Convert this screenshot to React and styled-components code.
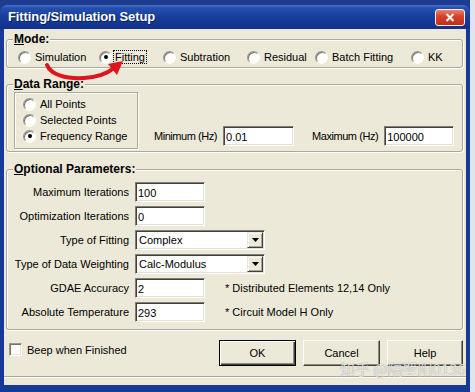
import React from 'react';
import styled, { createGlobalStyle } from 'styled-components';

const GlobalStyle = createGlobalStyle`
  html, body {
    margin: 0;
    padding: 0;
  }
  body {
    font-family: "Liberation Sans", Arial, sans-serif;
    font-size: 11px;
    color: #000;
    background: #1d3c8f;
  }
`;

const Screen = styled.div`
  position: relative;
  width: 475px;
  height: 392px;
  box-sizing: border-box;
  padding-top: 5px;
  overflow: hidden;
  background: linear-gradient(to right, #1d3c8f 470px, #dfe5ef 470px);
`;

const Window = styled.div`
  width: 470px;
  height: 387px;
  box-sizing: border-box;
  display: flex;
  flex-direction: column;
  padding-bottom: 7px;
  border-radius: 7px 7px 0 0;
  background: #17399a;
  overflow: hidden;
`;

const TitleBar = styled.div`
  height: 24px;
  flex: none;
  display: flex;
  align-items: center;
  justify-content: space-between;
  padding: 0 5px 0 8px;
  background: linear-gradient(180deg, #4a72c8 0%, #2650b0 12%, #183f9c 45%, #133591 85%, #123089 100%);
`;

const Title = styled.div`
  color: #fff;
  font-weight: bold;
  font-size: 13px;
  letter-spacing: -0.1px;
  text-shadow: 1px 1px 0 #0b1f5c;
  margin-top: -2px;
`;

const CloseButton = styled.div`
  width: 30px;
  height: 17px;
  box-sizing: border-box;
  border: 1px solid #f2f2f2;
  border-radius: 3px;
  background: linear-gradient(180deg, #e9866c 0%, #d6442a 40%, #c32d17 100%);
  display: flex;
  align-items: center;
  justify-content: center;
`;

const Client = styled.div`
  flex: 1;
  margin: 0 4px;
  display: flex;
  flex-direction: column;
  padding: 3px 3px 0 2px;
  background: #ece9d8;
`;

const Group = styled.fieldset`
  margin: ${(p) => p.$mt || 0}px 0 0 0;
  padding: 0;
  min-width: 0;
  border: 1px solid #aca899;
  border-radius: 3px;
  box-shadow: inset 1px 1px 0 #fff, 1px 1px 0 #fff;
`;

const Legend = styled.legend`
  margin-left: 6px;
  padding: 0 1px;
  font-size: 12px;
  font-weight: bold;
  line-height: 14px;
  background: #ece9d8;
`;

const RadioRow = styled.div`
  display: flex;
  align-items: center;
  height: 14px;
  padding: 4px 0 3px 11px;
`;

const RadioItem = styled.div`
  display: flex;
  align-items: center;
  gap: 4px;
  width: ${(p) => (p.$w ? `${p.$w}px` : 'auto')};
  flex: none;
  height: 14px;
  white-space: nowrap;
`;

const RadioDot = styled.span`
  width: 13px;
  height: 13px;
  box-sizing: border-box;
  flex: none;
  border-radius: 50%;
  border: 1px solid;
  border-color: #9a988d #fdfdfb #fdfdfb #9a988d;
  background: radial-gradient(circle at 60% 60%, #fff 55%, #ebe9e1 100%);
  box-shadow: inset 1px 1px 0 #77766d;
  display: flex;
  align-items: center;
  justify-content: center;

  &::after {
    content: '';
    display: ${(p) => (p.$checked ? 'block' : 'none')};
    width: 4px;
    height: 4px;
    border-radius: 50%;
    background: #000;
  }
`;

const RadioText = styled.span`
  line-height: 12px;
  ${(p) =>
    p.$focus &&
    `
    margin-left: -2px;
    padding: 0 1px;
    outline: 1px dotted #000;
    outline-offset: 0;
  `}
`;

const RangeBody = styled.div`
  display: flex;
  align-items: flex-end;
  padding: 1px 0 2px 7px;
`;

const InnerBox = styled.div`
  width: 124px;
  height: 57px;
  box-sizing: border-box;
  display: flex;
  flex-direction: column;
  gap: 2px;
  padding: 4px 0 0 8px;
  border: 1px solid #aca899;
  box-shadow: inset 1px 1px 0 #fff, 1px 1px 0 #fff;
`;

const FieldPair = styled.div`
  display: flex;
  align-items: center;
  gap: 6px;
  margin-left: ${(p) => p.$ml}px;
  margin-bottom: 3px;
  white-space: nowrap;
`;

const FieldLabel = styled.span`
  letter-spacing: -0.45px;
`;

const TextBox = styled.input`
  width: ${(p) => p.$w}px;
  height: 20px;
  box-sizing: border-box;
  margin: 0;
  padding: 1px 0 0 2px;
  font: inherit;
  font-size: 11px;
  color: #000;
  background: #fff;
  outline: none;
  border: 1px solid;
  border-color: #7f7d74 #fff #fff #7f7d74;
  box-shadow: inset 1px 1px 0 #404040, inset -1px -1px 0 #e3e1d6;
`;

const ParamList = styled.div`
  display: flex;
  flex-direction: column;
  gap: 4px;
  padding: 6px 0 7px 0;
`;

const ParamRow = styled.div`
  display: flex;
  align-items: center;
  height: 20px;
`;

const ParamLabel = styled.span`
  width: 122px;
  margin-right: 6px;
  text-align: right;
  white-space: nowrap;
`;

const Note = styled.span`
  margin-left: 20px;
  white-space: nowrap;
`;

const Combo = styled.div`
  width: 130px;
  height: 20px;
  box-sizing: border-box;
  display: flex;
  align-items: center;
  justify-content: space-between;
  padding: 2px 2px 2px 3px;
  background: #fff;
  border: 1px solid;
  border-color: #7f7d74 #fff #fff #7f7d74;
  box-shadow: inset 1px 1px 0 #404040, inset -1px -1px 0 #e3e1d6;
`;

const DropButton = styled.div`
  width: 16px;
  height: 16px;
  box-sizing: border-box;
  margin-right: -1px;
  display: flex;
  align-items: center;
  justify-content: center;
  background: #ece9d8;
  border: 1px solid;
  border-color: #ece9d8 #404040 #404040 #ece9d8;
  box-shadow: inset 1px 1px 0 #fff, inset -1px -1px 0 #aca899;
`;

const BottomRow = styled.div`
  display: flex;
  align-items: flex-start;
  margin-top: 10px;
  height: 26px;
`;

const CheckLine = styled.label`
  display: flex;
  align-items: center;
  gap: 5px;
  margin: 3px 0 0 3px;
  white-space: nowrap;
`;

const CheckBox = styled.span`
  width: 13px;
  height: 13px;
  box-sizing: border-box;
  flex: none;
  background: #fcfcfa;
  border: 1px solid;
  border-color: #9a988d #fff #fff #9a988d;
  box-shadow: inset 1px 1px 0 #77766d, inset -1px -1px 0 #e6e4da;
`;

const ButtonBar = styled.div`
  display: flex;
  gap: 7px;
  margin-left: auto;
`;

const Button = styled.div`
  width: ${(p) => p.$w}px;
  height: 26px;
  box-sizing: border-box;
  display: flex;
  align-items: center;
  justify-content: center;
  background: #ece9d8;
  border: 1px solid;
  border-color: ${(p) => (p.$default ? '#000' : '#fff #404040 #404040 #fff')};
  box-shadow: ${(p) =>
    p.$default
      ? 'inset 1px 1px 0 #fff, inset -1px -1px 0 #404040, inset -2px -2px 0 #8d8b80'
      : 'inset -1px -1px 0 #8d8b80'};
`;

const StatusStrip = styled.div`
  flex: 1;
  margin: 10px -3px 0 -2px;
  border-top: 1px solid #aca899;
  box-shadow: inset 0 1px 0 #fff;
`;

const Annotation = styled.svg`
  position: absolute;
  left: 0;
  top: 0;
  pointer-events: none;
`;

const Watermark = styled.div`
  position: absolute;
  left: 340px;
  top: 360px;
  font-family: "Noto Sans CJK SC", "Liberation Sans", sans-serif;
  font-size: 15px;
  line-height: 17px;
  color: rgba(255, 255, 255, 0.78);
  text-shadow: 0 0 1px rgba(60, 60, 60, 0.6);
  white-space: nowrap;
  pointer-events: none;
`;

const modes = [
  { label: 'Simulation', w: 81 },
  { label: 'Fitting', w: 64, checked: true },
  { label: 'Subtration', w: 84 },
  { label: 'Residual', w: 68 },
  { label: 'Batch Fitting', w: 96 },
  { label: 'KK' },
];

const ranges = [
  { label: 'All Points' },
  { label: 'Selected Points' },
  { label: 'Frequency Range', checked: true },
];

const ArrowDown = () => (
  <svg width="7" height="4" viewBox="0 0 7 4">
    <polygon points="0,0 7,0 3.5,4" fill="#000" />
  </svg>
);

export default function App() {
  return (
    <>
      <GlobalStyle />
      <Screen>
        <Window>
          <TitleBar>
            <Title>Fitting/Simulation Setup</Title>
            <CloseButton>
              <svg width="10" height="9" viewBox="0 0 10 9">
                <path d="M1.5 1 L8.5 8 M8.5 1 L1.5 8" stroke="#fff" strokeWidth="2" />
              </svg>
            </CloseButton>
          </TitleBar>

          <Client>
            <Group>
              <Legend>
                <u>M</u>ode:
              </Legend>
              <RadioRow>
                {modes.map((m) => (
                  <RadioItem key={m.label} $w={m.w}>
                    <RadioDot $checked={m.checked} />
                    <RadioText $focus={m.checked}>{m.label}</RadioText>
                  </RadioItem>
                ))}
              </RadioRow>
            </Group>

            <Group $mt={9}>
              <Legend>
                <u>D</u>ata Range:
              </Legend>
              <RangeBody>
                <InnerBox>
                  {ranges.map((r) => (
                    <RadioItem key={r.label}>
                      <RadioDot $checked={r.checked} />
                      <RadioText>{r.label}</RadioText>
                    </RadioItem>
                  ))}
                </InnerBox>
                <FieldPair $ml={16}>
                  <FieldLabel>Minimum (Hz)</FieldLabel>
                  <TextBox $w={71} defaultValue="0.01" readOnly />
                </FieldPair>
                <FieldPair $ml={18}>
                  <FieldLabel>Maximum (Hz)</FieldLabel>
                  <TextBox $w={70} defaultValue="100000" readOnly />
                </FieldPair>
              </RangeBody>
            </Group>

            <Group $mt={10}>
              <Legend>
                <u>O</u>ptional Parameters:
              </Legend>
              <ParamList>
                <ParamRow>
                  <ParamLabel>Maximum Iterations</ParamLabel>
                  <TextBox $w={70} defaultValue="100" readOnly />
                </ParamRow>
                <ParamRow>
                  <ParamLabel>Optimization Iterations</ParamLabel>
                  <TextBox $w={70} defaultValue="0" readOnly />
                </ParamRow>
                <ParamRow>
                  <ParamLabel>Type of Fitting</ParamLabel>
                  <Combo>
                    <span>Complex</span>
                    <DropButton>
                      <ArrowDown />
                    </DropButton>
                  </Combo>
                </ParamRow>
                <ParamRow>
                  <ParamLabel>Type of Data Weighting</ParamLabel>
                  <Combo>
                    <span>Calc-Modulus</span>
                    <DropButton>
                      <ArrowDown />
                    </DropButton>
                  </Combo>
                </ParamRow>
                <ParamRow>
                  <ParamLabel>GDAE Accuracy</ParamLabel>
                  <TextBox $w={70} defaultValue="2" readOnly />
                  <Note>* Distributed Elements 12,14 Only</Note>
                </ParamRow>
                <ParamRow>
                  <ParamLabel>Absolute Temperature</ParamLabel>
                  <TextBox $w={70} defaultValue="293" readOnly />
                  <Note>* Circuit Model H Only</Note>
                </ParamRow>
              </ParamList>
            </Group>

            <BottomRow>
              <CheckLine>
                <CheckBox />
                Beep when Finished
              </CheckLine>
              <ButtonBar>
                <Button $w={77} $default>OK</Button>
                <Button $w={77}>Cancel</Button>
                <Button $w={76}>Help</Button>
              </ButtonBar>
            </BottomRow>

            <StatusStrip />
          </Client>
        </Window>

        <Annotation width="475" height="392" viewBox="0 0 475 392">
          <path
            d="M47 65 C 51 75, 66 79, 84 78 C 99 77, 108 73, 114 68"
            fill="none"
            stroke="#e0141c"
            strokeWidth="4"
            strokeLinecap="round"
          />
          <polygon points="123,61 108,64 117,75" fill="#e0141c" />
        </Annotation>

        <Watermark>知乎 @隔壁阳0136</Watermark>
      </Screen>
    </>
  );
}
